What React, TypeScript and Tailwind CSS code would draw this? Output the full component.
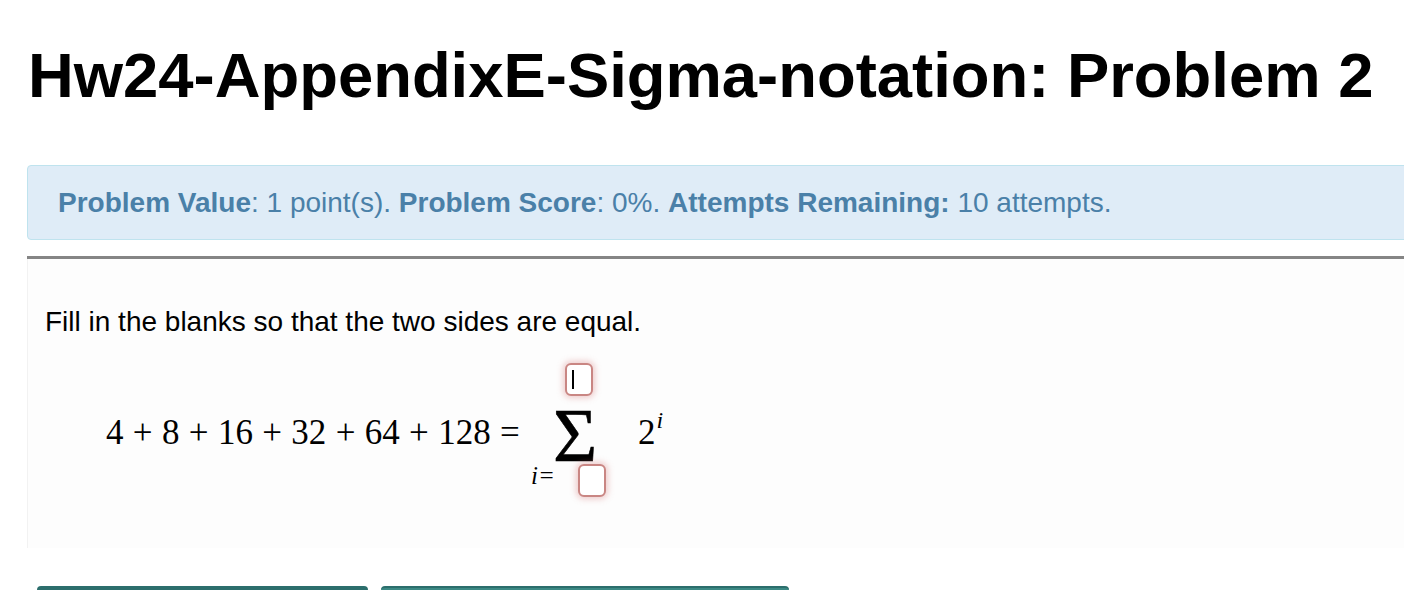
import React from 'react';

const BlankInput: React.FC<{ caret?: boolean }> = ({ caret }) => (
  <span className="relative block w-[28px] h-[33px] rounded-[6px] border-2 border-[#c98683] bg-white shadow-[0_0_6px_2px_rgba(210,110,110,0.35)]">
    {caret && <span className="absolute left-[5px] top-[5px] w-[2px] h-[19px] bg-black" />}
  </span>
);

export default function App() {
  return (
    <div className="w-[1404px] h-[590px] overflow-hidden bg-white font-['Liberation_Sans',Arial,sans-serif]">
      <div className="pl-[27px]">
        <h1 className="pt-[38px] pl-[1px] text-[63.4px] leading-[74px] font-bold text-black whitespace-nowrap">
          Hw24-AppendixE-Sigma-notation: Problem 2
        </h1>

        <div className="mt-[53px] w-[1400px] h-[75px] flex items-center pl-[30px] rounded-[4px] border border-[#bfe3ee] bg-[#dfecf7] text-[28px] text-[#4a80a8] whitespace-nowrap">
          <span>
            <b>Problem Value</b>: 1 point(s). <b>Problem Score</b>: 0%. <b>Attempts Remaining:</b> 10 attempts.
          </span>
        </div>

        <div className="mt-[16px] w-[1400px] border-t-[3px] border-[#858585]" />

        <div className="h-[289px] w-[1400px] border-l border-[#f2f2f2] bg-[#fdfdfd]">
          <p className="pt-[47px] pl-[17px] text-[28px] leading-[32px] text-black whitespace-nowrap">
            Fill in the blanks so that the two sides are equal.
          </p>

          <div className="mt-[25px] flex items-start pl-[78px] font-['Liberation_Serif','Times_New_Roman',serif] text-black">
            <span className="mt-[50px] w-[424px] text-[35px] leading-[40px] whitespace-nowrap [word-spacing:0.6px]">
              4 + 8 + 16 + 32 + 64 + 128 =
            </span>

            <span className="w-[106px] flex flex-col items-start">
              <span className="ml-[35px]">
                <BlankInput caret />
              </span>
              <span className="ml-[23px] mt-[2px] text-[76px] leading-[74px] [-webkit-text-stroke:0.6px_black]">Σ</span>
              <span className="flex items-start -mt-[8px]">
                <span className="ml-[1px] w-[47px] italic text-[25px] leading-[22px] mt-[1px]">i=</span>
                <BlankInput />
              </span>
            </span>

            <span className="mt-[50px] ml-[2px] text-[35px] leading-[40px] whitespace-nowrap">
              2<span className="relative -top-[16px] ml-[1px] italic text-[24px]">i</span>
            </span>
          </div>
        </div>

        <div className="mt-[38px] pl-[10px] flex gap-[13px]">
          <div className="w-[331px] h-[10px] rounded-t-[4px] bg-[#2c6e6c]" />
          <div className="w-[408px] h-[10px] rounded-t-[4px] border-t-2 border-[#2c6e6c] bg-[#3c8984]" />
        </div>
      </div>
    </div>
  );
}
